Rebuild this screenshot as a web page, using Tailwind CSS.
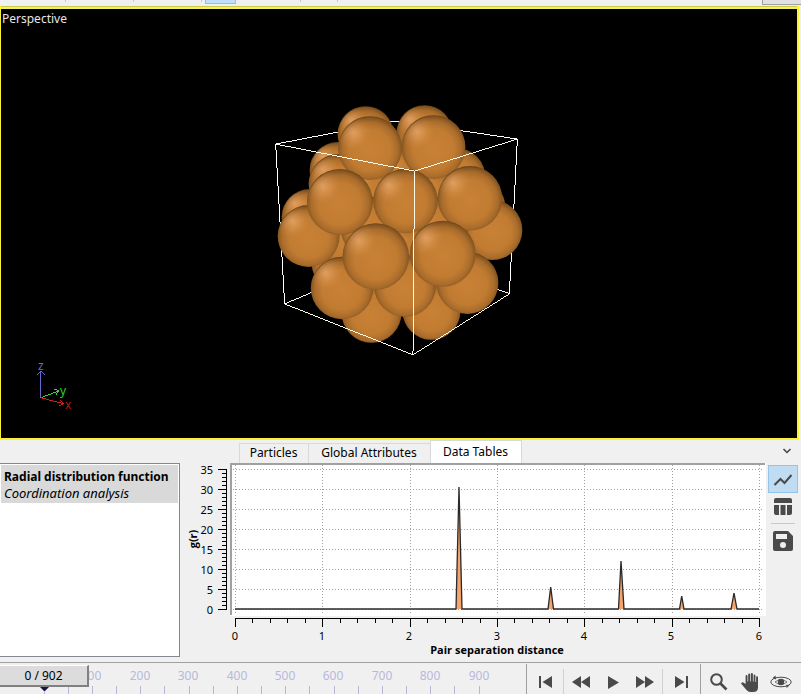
<!DOCTYPE html>
<html lang="en">
<head>
<meta charset="utf-8">
<title>Radial distribution function</title>
<script src="https://cdn.jsdelivr.net/npm/@tailwindcss/browser@4"></script>
</head>
<body class="flex h-screen min-h-[600px] flex-col overflow-hidden bg-[#f0f0f0] font-['Noto_Sans','Open_Sans',sans-serif] text-xs text-black">

<!-- Lower edge of the main toolbar -->
<div class="flex h-[6px] shrink-0 items-start">
  <span class="ml-[65px] h-0.5 w-px bg-[#c8c8c8]"></span>
  <span class="ml-[67px] h-0.5 w-px bg-[#c8c8c8]"></span>
  <span class="ml-[67px] h-0.5 w-px bg-[#c8c8c8]"></span>
  <span class="ml-[3px] h-1 w-[31px] border border-t-0 border-[#92c0e8] bg-[#c0dff8]"></span>
  <span class="ml-16 h-0.5 w-px bg-[#c8c8c8]"></span>
  <span class="ml-9 h-0.5 w-px bg-[#c8c8c8]"></span>
  <span class="ml-auto h-[5px] w-[39px] border-b border-l border-[#a0a0a0] bg-[#e1e1e1]"></span>
</div>

<!-- 3D viewport -->
<main class="relative mr-0.5 flex min-h-0 flex-1 flex-col border-r-2 border-b-2 border-l border-[#fbf232] bg-black">
  <div class="h-px shrink-0 bg-[#c9c94c]"></div>
  <div class="h-0.5 shrink-0 bg-[#f4f05a]"></div>
  <span class="absolute top-[5px] left-px text-xs leading-4 text-[#e6e6e6]">Perspective</span>
  <svg class="min-h-0 w-full flex-1" viewBox="1 9 797 429" role="img" aria-label="Atomic cluster in a simulation cell">
    <defs>
      <radialGradient id="body" cx="0.5" cy="0.53" r="0.53">
        <stop offset="0" stop-color="#c88135"/>
        <stop offset="0.6" stop-color="#c27c32"/>
        <stop offset="0.82" stop-color="#a96c2b"/>
        <stop offset="0.95" stop-color="#845420"/>
        <stop offset="1" stop-color="#664018"/>
      </radialGradient>
      <radialGradient id="shine" cx="0.23" cy="0.25" r="0.3">
        <stop offset="0" stop-color="#f0b074" stop-opacity="0.72"/>
        <stop offset="0.4" stop-color="#e6a262" stop-opacity="0.45"/>
        <stop offset="1" stop-color="#cc853a" stop-opacity="0"/>
      </radialGradient>
      <g id="atom"><circle r="1" fill="url(#body)"/><circle r="0.97" fill="url(#shine)"/></g>
    </defs>
    <!-- cell edges behind the atoms -->
    <path d="M276 144L395 121L518 139M276 144L285 304M518 139L510 294M285 304L398 256L510 294" fill="none" stroke="#fff" shape-rendering="crispEdges"/>
    <!-- back layer -->
    <use href="#atom" transform="translate(366 134) scale(28)"/>
    <use href="#atom" transform="translate(425 133) scale(28)"/>
    <use href="#atom" transform="translate(338 170) scale(28)"/>
    <use href="#atom" transform="translate(339 184) scale(30)"/>
    <use href="#atom" transform="translate(310 217) scale(28)"/>
    <use href="#atom" transform="translate(341 263) scale(29)"/>
    <use href="#atom" transform="translate(457 177) scale(29)"/>
    <use href="#atom" transform="translate(478 207) scale(28)"/>
    <use href="#atom" transform="translate(460 242) scale(28)"/>
    <use href="#atom" transform="translate(493 230) scale(30)"/>
    <!-- inner layer -->
    <use href="#atom" transform="translate(346 238) scale(30)"/>
    <use href="#atom" transform="translate(404 178) scale(30)"/>
    <use href="#atom" transform="translate(373 198) scale(31)"/>
    <use href="#atom" transform="translate(438 200) scale(31)"/>
    <use href="#atom" transform="translate(372 228) scale(31)"/>
    <use href="#atom" transform="translate(438 228) scale(31)"/>
    <use href="#atom" transform="translate(408 255) scale(31)"/>
    <use href="#atom" transform="translate(372 313) scale(30)"/>
    <use href="#atom" transform="translate(432 311) scale(29)"/>
    <!-- front layer -->
    <use href="#atom" transform="translate(405.500 286) scale(31)"/>
    <use href="#atom" transform="translate(342.500 288) scale(31.300)"/>
    <use href="#atom" transform="translate(468 283) scale(31)"/>
    <use href="#atom" transform="translate(309 236) scale(31)"/>
    <use href="#atom" transform="translate(370.500 148) scale(32)"/>
    <use href="#atom" transform="translate(434 147) scale(32)"/>
    <use href="#atom" transform="translate(406 201) scale(32.300)"/>
    <use href="#atom" transform="translate(340.300 202) scale(33)"/>
    <use href="#atom" transform="translate(470.500 198.300) scale(32.300)"/>
    <use href="#atom" transform="translate(376.300 256.500) scale(33.300)"/>
    <use href="#atom" transform="translate(443.300 253.800) scale(33)"/>
    <!-- cell edges in front of the atoms -->
    <path d="M276 144L415 171L518 139M415 171L413.500 355M285 304L413.500 355L510 294" fill="none" stroke="#fffbe8" shape-rendering="crispEdges"/>
    <!-- orientation tripod -->
    <g fill="none" shape-rendering="crispEdges">
      <path d="M41 398V371M37 375L41 371L45 375" stroke="#6868d0"/>
      <path d="M41 398L59 391M54 389L59 391L56 395" stroke="#40d040"/>
      <path d="M41 398L64 404M60 400L64 404L59 406" stroke="#c82020"/>
    </g>
    <g font-size="12">
      <text x="38" y="370" fill="#6868d0">z</text>
      <text x="60" y="395" fill="#30d030">y</text>
      <text x="65" y="409" fill="#b41c1c">x</text>
    </g>
  </svg>
</main>

<!-- Data inspector -->
<section class="flex shrink-0 flex-col">
  <div class="flex h-[23px]">
    <div class="flex flex-1 items-end justify-center" role="tablist">
      <button role="tab" aria-selected="false" class="h-5 w-[70px] border border-b-0 border-[#d9d9d9] pb-0.5 text-xs leading-4">Particles</button>
      <button role="tab" aria-selected="false" class="h-5 w-[121px] border-t border-[#d9d9d9] pb-0.5 text-xs leading-4">Global Attributes</button>
      <button role="tab" aria-selected="true" class="h-[23px] w-[92px] border border-b-0 border-[#d9d9d9] bg-white text-xs leading-4">Data Tables</button>
    </div>
    <button aria-label="Collapse panel" class="flex w-[41px] items-center justify-center pb-0.5 pl-3">
      <svg width="10" height="6" viewBox="0 0 10 6" fill="none" stroke="#404040" stroke-width="1.500"><path d="M1.500 1L5 4.500L8.500 1"/></svg>
    </button>
  </div>
  <div class="flex h-[199px]">
    <div class="mb-[5px] w-[180px] shrink-0 border border-l-0 border-[#828790] bg-white p-px" role="listbox" aria-label="Data tables">
      <div role="option" aria-selected="true" class="h-[38px] bg-[#d9d9d9] pt-1 pl-[3px] leading-4 whitespace-nowrap">
        <div class="text-xs leading-4 font-bold">Radial distribution function</div>
        <div class="text-[13px] leading-4 italic">Coordination analysis</div>
      </div>
    </div>
    <svg class="h-full min-w-0 flex-1" viewBox="180 463 587 199" role="img" aria-label="g(r) against pair separation distance">
      <rect x="230" y="463" width="536" height="153" fill="#fff"/>
      <path d="M230 464H765M231 463V615" stroke="#a0a0a0" stroke-width="2"/>
      <path stroke="#a0a0a0" stroke-dasharray="1 2" shape-rendering="crispEdges" d="M233 469.500H763M233 489.500H763M233 509.500H763M233 529.500H763M233 549.500H763M233 569.500H763M233 589.500H763M233 609.500H763M235.500 465V614M322.500 465V614M410.500 465V614M497.500 465V614M584.500 465V614M672.500 465V614M759.500 465V614"/>
      <path d="M235 609H456L459 487L462 609H548L550.700 587L553.500 609H618.500L621 561L624 609H679.500L681.700 596L684 609H731L734 593L737 609H759" fill="#f4a46c" stroke="#2a2a2a" stroke-width="1.300"/>
      <!-- axes -->
      <path stroke="#000" fill="none" shape-rendering="crispEdges" d="M226.500 469V610M218 469.500H226M218 489.500H226M218 509.500H226M218 529.500H226M218 549.500H226M218 569.500H226M218 589.500H226M218 609.500H226M235 618.500H760M235.500 618V627M322.500 618V627M410.500 618V627M497.500 618V627M584.500 618V627M672.500 618V627M759.500 618V627"/>
      <path stroke="#000" stroke-width="4" stroke-dasharray="1 3" shape-rendering="crispEdges" d="M224 469V610"/>
      <path stroke="#000" shape-rendering="crispEdges" d="M252.500 618V623M270.500 618V623M287.500 618V623M305.500 618V623M340.500 618V623M357.500 618V623M375.500 618V623M392.500 618V623M427.500 618V623M445.500 618V623M462.500 618V623M480.500 618V623M514.500 618V623M532.500 618V623M549.500 618V623M567.500 618V623M602.500 618V623M619.500 618V623M637.500 618V623M654.500 618V623M689.500 618V623M707.500 618V623M724.500 618V623M742.500 618V623"/>
      <g font-size="11" text-anchor="end">
        <text x="213" y="474">35</text><text x="213" y="494">30</text><text x="213" y="514">25</text><text x="213" y="534">20</text>
        <text x="213" y="554">15</text><text x="213" y="574">10</text><text x="213" y="594">5</text><text x="213" y="614">0</text>
      </g>
      <g font-size="11" text-anchor="middle">
        <text x="235" y="640">0</text><text x="322" y="640">1</text><text x="409" y="640">2</text><text x="497" y="640">3</text>
        <text x="584" y="640">4</text><text x="671" y="640">5</text><text x="759" y="640">6</text>
      </g>
      <g font-size="11" font-weight="700" text-anchor="middle" font-family="Open Sans, Noto Sans, sans-serif">
        <text x="497" y="654">Pair separation distance</text>
        <text transform="translate(197 539) rotate(-90)">g(r)</text>
      </g>
    </svg>
    <div class="flex w-[34px] shrink-0 flex-col items-center pt-0.5 pr-0.5 text-[#4a4a4a]">
      <button aria-label="Show chart" class="flex h-7 w-[30px] shrink-0 items-center justify-center border border-[#93c4ec] bg-[#c0dcf3] pt-0.5">
        <svg width="20" height="14" viewBox="0 0 20 14" fill="none" stroke="currentColor" stroke-width="2"><path d="M1.500 12L7.500 6L11.500 10L18.500 2"/></svg>
      </button>
      <button aria-label="Show table" class="flex h-7 w-[30px] shrink-0 items-center justify-center">
        <svg width="18" height="18" viewBox="0 0 18 18" fill="currentColor"><path d="M2 0H16Q18 0 18 2V5H0V2Q0 0 2 0ZM0 7H5V17H2Q0 17 0 15ZM6.500 7H11.500V17H6.500ZM13 7H18V15Q18 17 16 17H13Z"/></svg>
      </button>
      <hr class="my-0.5 w-6 border-[#c8c8c8]">
      <button aria-label="Save data" class="flex h-[30px] w-[30px] shrink-0 items-center justify-center">
        <svg width="20" height="20" viewBox="0 0 20 20" fill="currentColor" fill-rule="evenodd"><path d="M2 0H15L20 5V18Q20 20 18 20H2Q0 20 0 18V2Q0 0 2 0ZM3 3V8H14V3ZM10 11A3 3 0 1 0 10 17A3 3 0 1 0 10 11Z"/></svg>
      </button>
    </div>
  </div>
</section>

<!-- Animation bar -->
<footer class="flex h-8 shrink-0 border-t border-[#a0a0a0] text-[#4a4a4a]">
  <div class="relative min-w-0 flex-1">
    <svg class="h-[31px] w-full" viewBox="0 663 526 31" preserveAspectRatio="xMinYMid meet" role="img" aria-label="Timeline">
      <path stroke="#b6b6dc" shape-rendering="crispEdges" d="M68.500 686V694M92.500 686V694M116.500 686V694M140.500 686V694M164.500 686V694M189.500 686V694M213.500 686V694M237.500 686V694M261.500 686V694M285.500 686V694M309.500 686V694M334.500 686V694M358.500 686V694M382.500 686V694M406.500 686V694M430.500 686V694M454.500 686V694M479.500 686V694M44.500 690V694"/>
      <path d="M40 686H49V687L45 691H44L40 687Z" fill="#141446"/>
      <g font-size="12" text-anchor="middle" fill="#b8b8dc">
        <text x="91" y="680">100</text><text x="140" y="680">200</text><text x="188" y="680">300</text><text x="237" y="680">400</text><text x="285" y="680">500</text>
        <text x="333" y="680">600</text><text x="382" y="680">700</text><text x="430" y="680">800</text><text x="479" y="680">900</text>
      </g>
    </svg>
    <button class="absolute top-0.5 left-0 h-[22px] w-[89px] border-t border-r-2 border-b-2 border-t-white border-r-[#808080] border-b-[#808080] bg-[#dcdcdc] text-xs leading-4 text-black">0 / 902</button>
  </div>
  <div class="mt-px w-px bg-[#a0a0a0]"></div>
  <button aria-label="First frame" class="flex w-9 items-center justify-center pt-[7px]"><svg width="13" height="12" viewBox="0 0 13 12" fill="currentColor"><path d="M0 0H2V12H0ZM13 0V12L3.500 6Z"/></svg></button>
  <div class="mt-1.5 w-px bg-[#d0d0d0]"></div>
  <div class="flex px-px pt-[7px]">
    <button aria-label="Fast backward" class="flex w-8 items-center justify-center"><svg width="18" height="12" viewBox="0 0 18 12" fill="currentColor"><path d="M9 0V12L0 6ZM18 0V12L9 6Z"/></svg></button>
    <button aria-label="Play" class="flex w-8 items-center justify-center"><svg width="11" height="13" viewBox="0 0 11 13" fill="currentColor"><path d="M0 0L11 6.500L0 13Z"/></svg></button>
    <button aria-label="Fast forward" class="flex w-8 items-center justify-center"><svg width="18" height="12" viewBox="0 0 18 12" fill="currentColor"><path d="M0 0L9 6L0 12ZM9 0L18 6L9 12Z"/></svg></button>
  </div>
  <div class="mt-1.5 w-px bg-[#d0d0d0]"></div>
  <button aria-label="Last frame" class="flex w-[37px] items-center justify-center pt-[7px]"><svg width="13" height="12" viewBox="0 0 13 12" fill="currentColor"><path d="M11 0H13V12H11ZM0 0L9.500 6L0 12Z"/></svg></button>
  <div class="mt-px w-px bg-[#a0a0a0]"></div>
  <div class="flex pt-[7px] pr-[5px] pl-0.5">
    <button aria-label="Zoom" class="flex w-[31px] items-center justify-center"><svg width="18" height="18" viewBox="0 0 18 18" fill="none" stroke="currentColor"><circle cx="6.500" cy="6.500" r="5.300" stroke-width="2"/><path d="M10.500 10.500L16.500 16.500" stroke-width="2.600"/></svg></button>
    <button aria-label="Pan" class="flex w-[31px] items-center justify-center"><svg width="17" height="19" viewBox="0 0 17 19" fill="currentColor"><path d="M17 4V14.500Q17 19 12 19H9.500Q7 19 5.500 17L0 10.500L1 9.500Q1.600 9.100 2.300 9.500L4.600 11V3Q4.600 2 5.500 2Q6.500 2 6.500 3V8.500H7.200V1.200Q7.200 0.400 8.200 0.400Q9.200 0.400 9.200 1.200V8.500H9.900V1Q9.900 0 10.900 0Q11.900 0 11.900 1V8.500H12.600V2.400Q12.600 1.500 13.500 1.500Q14.400 1.500 14.400 2.400V9H15.100V4Q15.100 3.200 16 3.200Q17 3.200 17 4Z"/></svg></button>
    <button aria-label="Orbit" class="flex w-[31px] items-center justify-center"><svg width="22" height="14" viewBox="0 0 22 14" fill="none" stroke="currentColor"><ellipse cx="11" cy="7" rx="10.200" ry="4.800"/><path d="M5 7Q11 2 17 7Q11 12 5 7Z" stroke-width="0.700"/><circle cx="11" cy="7" r="3.200" fill="currentColor" stroke="none"/><path d="M5.500 0.500L2.500 3L6 4.500ZM16.500 9.500L19.500 10.500L16.500 13Z" fill="currentColor" stroke="none"/></svg></button>
  </div>
</footer>
</body>
</html>
